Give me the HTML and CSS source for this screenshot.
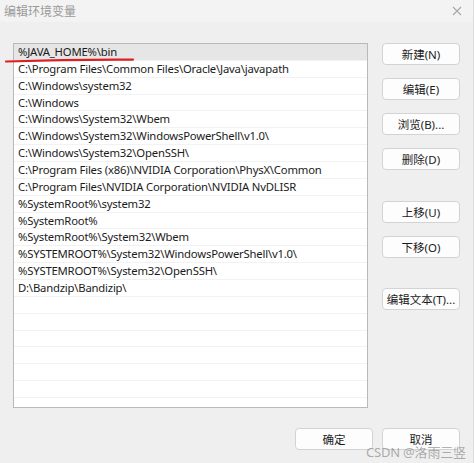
FILE: index.html
```html
<!DOCTYPE html>
<html lang="zh-CN">
<head>
  <meta charset="UTF-8">
  <title>编辑环境变量</title>
  <link rel="stylesheet" href="styles.css">
</head>
<body>
  <div class="dialog">
    <div class="titlebar">
      <span class="title">编辑环境变量</span>
      <svg class="close" width="10" height="10" viewBox="0 0 10 10">
        <path d="M1 1L9 9M9 1L1 9" stroke="#a8a8a8" stroke-width="1.1" fill="none"/>
      </svg>
    </div>
    <div class="content">
      <div class="list">
        <div class="row selected">%JAVA_HOME%\bin</div>
        <div class="row">C:\Program Files\Common Files\Oracle\Java\javapath</div>
        <div class="row">C:\Windows\system32</div>
        <div class="row">C:\Windows</div>
        <div class="row">C:\Windows\System32\Wbem</div>
        <div class="row">C:\Windows\System32\WindowsPowerShell\v1.0\</div>
        <div class="row">C:\Windows\System32\OpenSSH\</div>
        <div class="row">C:\Program Files (x86)\NVIDIA Corporation\PhysX\Common</div>
        <div class="row">C:\Program Files\NVIDIA Corporation\NVIDIA NvDLISR</div>
        <div class="row">%SystemRoot%\system32</div>
        <div class="row">%SystemRoot%</div>
        <div class="row">%SystemRoot%\System32\Wbem</div>
        <div class="row">%SYSTEMROOT%\System32\WindowsPowerShell\v1.0\</div>
        <div class="row">%SYSTEMROOT%\System32\OpenSSH\</div>
        <div class="row">D:\Bandzip\Bandizip\</div>
        <div class="row"></div>
        <div class="row"></div>
        <div class="row"></div>
        <div class="row"></div>
        <div class="row"></div>
        <div class="row"></div>
        <div class="row"></div>
      </div>
      <div class="actions">
        <button class="btn">新建(N)</button>
        <button class="btn">编辑(E)</button>
        <button class="btn">浏览(B)...</button>
        <button class="btn">删除(D)</button>
        <button class="btn gap">上移(U)</button>
        <button class="btn">下移(O)</button>
        <button class="btn gap">编辑文本(T)...</button>
      </div>
    </div>
    <div class="footer">
      <button class="btn">确定</button>
      <button class="btn">取消</button>
    </div>

    <!-- 红色标注线 -->
    <svg class="mark" width="140" height="8" viewBox="0 0 140 8">
      <path d="M2 5.5C40 4.2 90 3.4 129 3.6" stroke="#dc1f22" stroke-width="2.2" stroke-linecap="round" fill="none"/>
    </svg>
    <div class="watermark">CSDN @洛雨三竖</div>
  </div>
</body>
</html>
```

FILE: styles.css
```css
* {
  margin: 0;
  padding: 0;
  box-sizing: border-box;
}
body {
  width: 474px;
  height: 463px;
  overflow: hidden;
  background: #efefef;
  font-family: "Segoe UI", "Noto Sans", "Noto Sans CJK SC", sans-serif;
  font-size: 12px;
  color: #1b1b1b;
}
.dialog {
  position: relative;
  width: 474px;
  height: 463px;
  border-right: 1px solid #dcdcdc;
}
.titlebar {
  height: 22px;
  display: flex;
  align-items: center;
  justify-content: space-between;
  padding: 0 11px 0 4px;
  background: #f3f3f3;
}
.title {
  color: #9a9a9a;
  font-size: 12px;
}
.content {
  display: flex;
  align-items: flex-start;
  padding: 21px 0 0 13px;
}
.list {
  width: 355px;
  height: 365px;
  background: #fff;
  border: 1px solid #b9b9b9;
  overflow: hidden;
}
.row {
  height: 16.86px;
  line-height: 16px;
  padding-left: 4px;
  border-bottom: 1px solid #f2f2f2;
  white-space: nowrap;
  font-family: "Noto Sans", "Noto Sans CJK SC", sans-serif;
  font-size: 11.3px;
  letter-spacing: -0.2px;
}
.row.selected {
  background: #e6e6e6;
}
.actions {
  display: flex;
  flex-direction: column;
  gap: 13px;
  margin-left: 14px;
}
.btn {
  width: 78px;
  height: 22px;
  background: #fdfdfd;
  border: 1px solid #d3d3d3;
  border-radius: 4px;
  font-family: "Noto Sans", "Noto Sans CJK SC", sans-serif;
  font-size: 11.5px;
  color: #1b1b1b;
}
.actions .gap {
  margin-top: 18px;
}
.actions .btn:last-child {
  margin-top: 17px;
}
.footer {
  display: flex;
  justify-content: flex-end;
  gap: 9px;
  padding: 20px 13px 0 0;
}
.mark {
  position: absolute;
  left: 4px;
  top: 56px;
}
.watermark {
  position: absolute;
  left: 366px;
  top: 442px;
  font-family: "Noto Sans", "Noto Sans CJK SC", sans-serif;
  font-size: 13px;
  color: rgba(110, 110, 110, 0.55);
  letter-spacing: -0.2px;
}
```
